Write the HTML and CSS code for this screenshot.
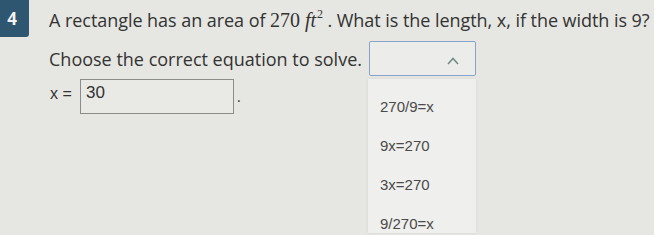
FILE: index.html
```html
<!DOCTYPE html>
<html lang="en">
<head>
    <meta charset="UTF-8">
    <title>Question 4</title>
    <link rel="stylesheet" href="styles.css">
</head>
<body>
    <div class="question">
        <div class="badge">4</div>
        <div class="content">
            <p class="prompt">A rectangle has an area of <span class="math">270 <i>ft</i><sup>2</sup></span> . What is the length, x, if the width is 9?</p>
            <div class="choose-row">
                <span>Choose the correct equation to solve.</span>
                <div class="dropdown">
                    <div class="select">
                        <svg class="caret" width="12" height="8" viewBox="0 0 12 8">
                            <path d="M1 7 L6 1.5 L11 7" fill="none" stroke="#6f8f86" stroke-width="1.6"/>
                        </svg>
                    </div>
                    <ul class="options">
                        <li>270/9=x</li>
                        <li>9x=270</li>
                        <li>3x=270</li>
                        <li>9/270=x</li>
                    </ul>
                </div>
            </div>
            <div class="answer-row">
                <span class="var">x =</span>
                <div class="answer-box">30</div>
                <span class="dot">.</span>
            </div>
        </div>
    </div>
</body>
</html>
```
FILE: styles.css
```css
body {
    margin: 0;
    padding: 0;
    background-color: #e6e6e2;
    font-family: "Open Sans", sans-serif;
    color: #333;
    height: 235px;
    overflow: hidden;
}

.question {
    display: flex;
    align-items: flex-start;
}

.badge {
    width: 29px;
    height: 37px;
    background-color: #2f5670;
    border-bottom-right-radius: 3px;
    color: #f4f4f4;
    font-weight: bold;
    font-size: 17px;
    display: flex;
    align-items: center;
    justify-content: center;
    padding-right: 5px;
    box-sizing: border-box;
}

.content {
    padding-left: 20px;
}

.prompt {
    margin: 8px 0 0;
    font-size: 18px;
    line-height: 24px;
    letter-spacing: -0.05px;
}

.math {
    font-family: "Liberation Serif", serif;
    font-size: 20px;
}

.math sup {
    font-size: 12px;
    vertical-align: 9px;
    line-height: 0;
    margin-left: 1px;
}

.choose-row {
    display: flex;
    align-items: center;
    margin-top: 9px;
    font-size: 18px;
}

.dropdown {
    position: relative;
    margin-left: 7px;
}

.select {
    width: 107px;
    height: 35px;
    box-sizing: border-box;
    border: 1.5px solid #88a3c9;
    border-radius: 2px;
    background-color: #ececea;
    position: relative;
}

.caret {
    position: absolute;
    right: 16px;
    top: 15px;
}

.options {
    position: absolute;
    top: 38px;
    left: -1px;
    width: 108px;
    margin: 0;
    padding: 18px 0 0;
    list-style: none;
    background-color: #efefed;
    box-shadow: 0 0 3px rgba(0, 0, 0, 0.08);
    height: 154px;
    box-sizing: border-box;
    overflow: hidden;
}

.options li {
    font-family: "Liberation Sans", sans-serif;
    font-size: 15px;
    color: #4a4a4a;
    padding-left: 12px;
    height: 39px;
    line-height: 20px;
}

.answer-row {
    display: flex;
    align-items: center;
    margin-top: 3px;
}

.var {
    font-family: "Liberation Sans", sans-serif;
    font-size: 16px;
    width: 30px;
    padding-left: 1px;
    margin-top: -6px;
}

.answer-box {
    width: 154px;
    height: 35px;
    box-sizing: border-box;
    border: 1px solid #8c8c8c;
    background-color: #e9e9e6;
    font-family: "Liberation Sans", sans-serif;
    font-size: 17px;
    padding: 3px 0 0 5px;
}

.dot {
    font-size: 14px;
    margin-left: 3px;
}
```
